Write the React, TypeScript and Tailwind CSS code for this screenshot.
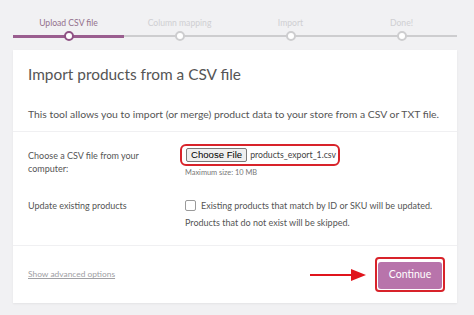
import React from 'react'

const steps = [
  { label: 'Upload CSV file', done: true },
  { label: 'Column mapping', done: false },
  { label: 'Import', done: false },
  { label: 'Done!', done: false },
]

function Stepper() {
  return (
    <ol className="flex pt-[16px]">
      {steps.map((step) => (
        <li key={step.label} className="flex w-[111px] flex-col items-center">
          <span
            className={
              step.done
                ? 'text-[8.6px] leading-[14px] text-[#93708c]'
                : 'text-[8.6px] leading-[14px] text-[#cfcfd2]'
            }
          >
            {step.label}
          </span>
          <div className="relative mt-[5px] h-[2px] w-full">
            <div className={step.done ? 'h-[3px] w-full bg-[#9a5e8f]' : 'h-[2px] w-full bg-[#cdcdcf]'} />
            <span
              className={
                step.done
                  ? 'absolute left-1/2 top-[-4px] h-[10px] w-[10px] -translate-x-1/2 rounded-full border-[2px] border-[#8f5284] bg-white'
                  : 'absolute left-1/2 top-[-4px] h-[10px] w-[10px] -translate-x-1/2 rounded-full border-[2px] border-[#cdcdcf] bg-white'
              }
            />
          </div>
        </li>
      ))}
    </ol>
  )
}

export default function App() {
  return (
    <main
      className="h-[315px] w-[474px] overflow-hidden bg-[#f1f1f3] pl-[13px] text-[#555]"
      style={{ fontFamily: 'Lato, "Open Sans", sans-serif' }}
    >
      <Stepper />

      <section className="mt-[13px] w-[444px] bg-white shadow-[0_1px_2px_rgba(0,0,0,0.06)]">
        <header className="border-b border-[#f0f0f2] px-[15px] pb-[10px] pt-[12px]">
          <h2 className="text-[15.4px] leading-[24px] text-[#555]">Import products from a CSV file</h2>
          <p className="mt-[21px] text-[10.4px] leading-[14px] text-[#555]">
            This tool allows you to import (or merge) product data to your store from a CSV or TXT file.
          </p>
        </header>

        <div className="px-[15px] pb-[14px] pt-[12px]">
          <div className="flex">
            <label className="w-[157px] pt-[5px] text-[9px] leading-[13px] text-[#555]">
              Choose a CSV file from your
              <br />
              computer:
            </label>
            <div>
              <div className="-ml-[5px] flex h-[22px] w-[160px] items-center rounded-[6px] border-2 border-[#d8232a] pl-[4px]">
                <span
                  className="whitespace-nowrap rounded-[2px] border border-[#7a7a7a] bg-[#efefef] px-[4px] text-[9.6px] leading-[12px] text-black"
                  style={{ fontFamily: '"Liberation Sans", Arial, sans-serif' }}
                >
                  Choose File
                </span>
                <span className="ml-[3px] whitespace-nowrap text-[8.7px] text-[#444]">products_export_1.csv</span>
              </div>
              <p className="mt-[1px] text-[7.4px] leading-[12px] text-[#777]">Maximum size: 10 MB</p>
            </div>
          </div>

          <div className="mt-[18px] flex">
            <span className="w-[157px] text-[9px] leading-[17px] text-[#555]">Update existing products</span>
            <div className="text-[9px] leading-[17px] text-[#555]">
              <div className="flex items-center whitespace-nowrap">
                <span className="mr-[5px] inline-block h-[11px] w-[11px] rounded-[2px] border border-[#9a9a9a] bg-white" />
                Existing products that match by ID or SKU will be updated.
              </div>
              <div>Products that do not exist will be skipped.</div>
            </div>
          </div>
        </div>

        <footer className="flex h-[58px] items-center justify-between border-t border-[#f0f0f2] pl-[15px] pr-[12px]">
          <a className="text-[8.4px] text-[#a0a0a4] underline">Show advanced options</a>
          <div className="flex items-center">
            <svg width="58" height="14" viewBox="0 0 58 14" className="mr-[8px]">
              <line x1="1" y1="7" x2="46" y2="7" stroke="#e0141c" strokeWidth="2" />
              <path d="M42 1 L57 7 L42 13 Z" fill="#e0141c" />
            </svg>
            <div className="rounded-[4px] border-2 border-[#d8232a] p-[1px]">
              <button className="h-[27px] w-[64px] rounded-[3px] bg-[#b874ab] text-[10.5px] text-white">Continue</button>
            </div>
          </div>
        </footer>
      </section>
    </main>
  )
}
